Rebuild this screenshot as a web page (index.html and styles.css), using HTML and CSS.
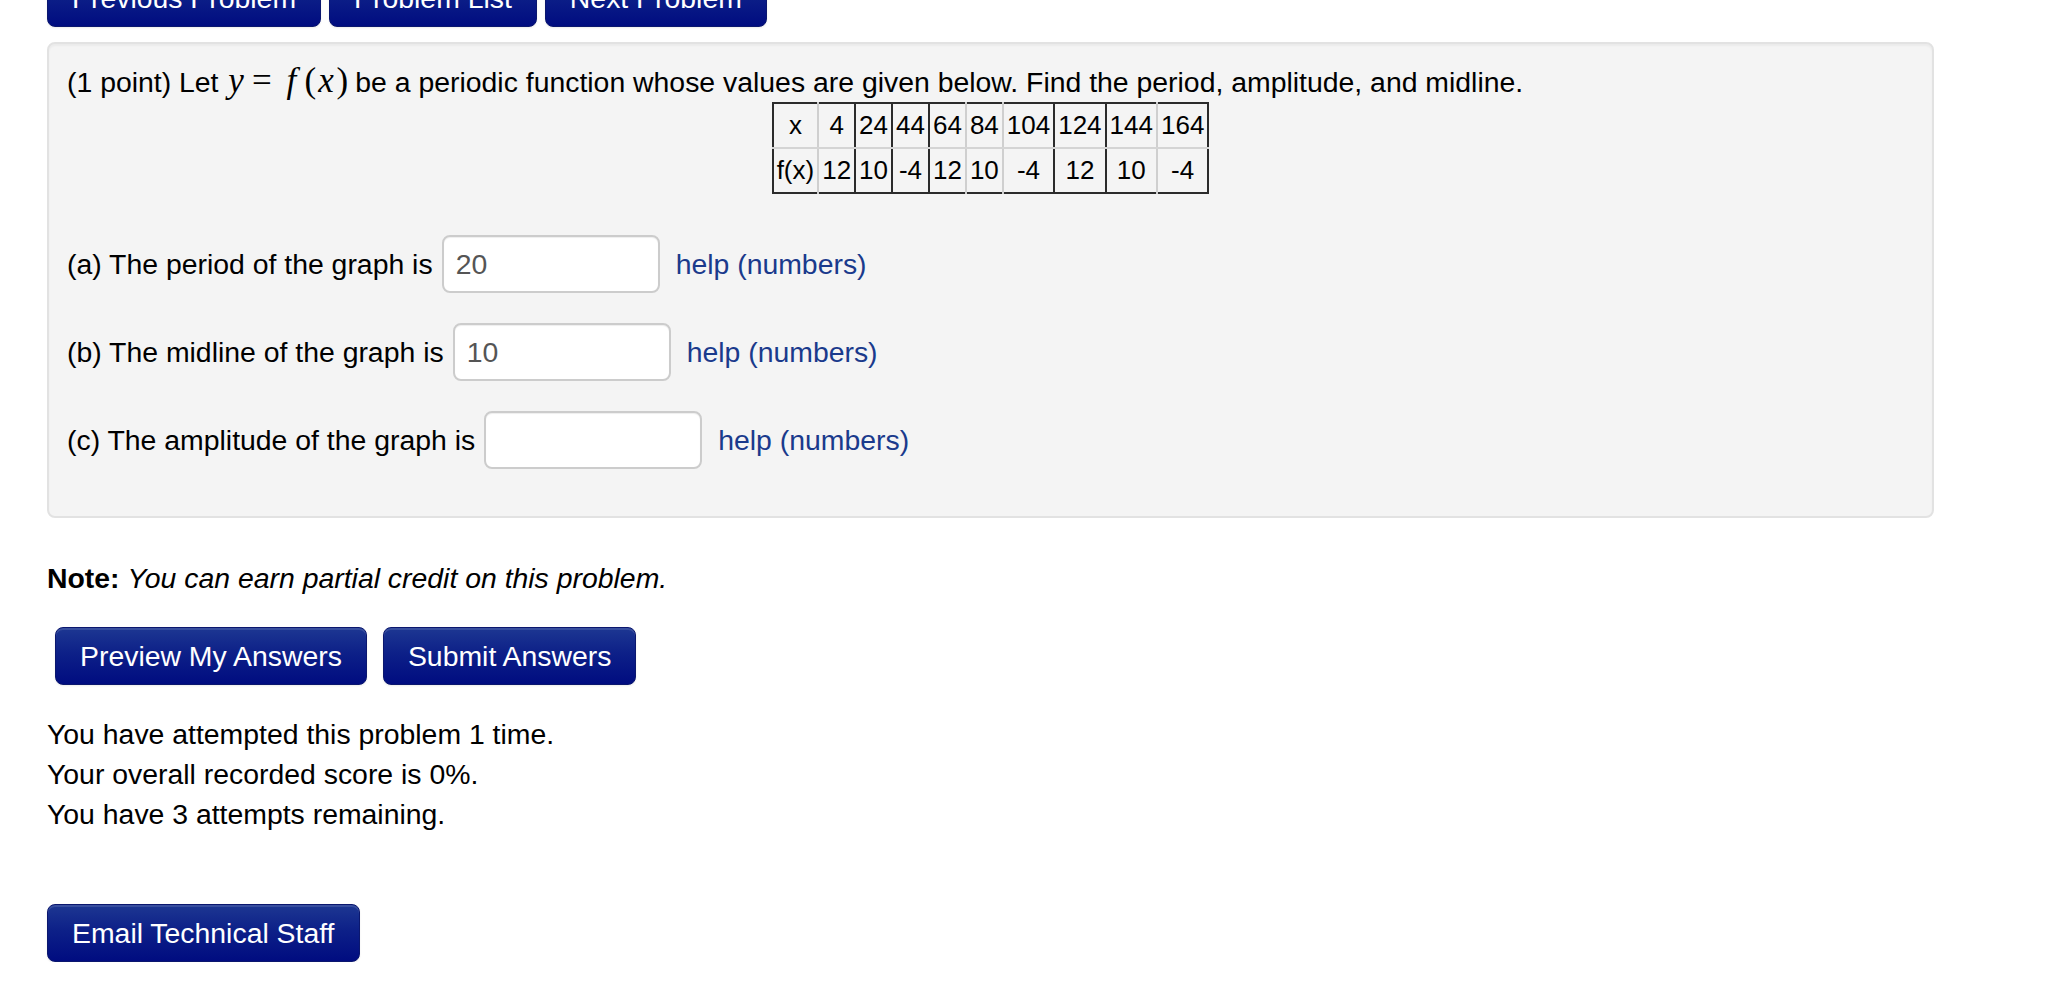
FILE: index.html
```html
<!DOCTYPE html>
<html lang="en">
<head>
<meta charset="utf-8">
<title>Problem</title>
<link rel="stylesheet" href="styles.css">
</head>
<body>
<div class="page">
  <div class="nav">
    <a class="btn" href="#">Previous Problem</a>
    <a class="btn" href="#">Problem List</a>
    <a class="btn" href="#">Next Problem</a>
  </div>

  <div class="panel">
    <p class="question">(1 point) Let <span class="math"><span class="mi m-y">y</span><span class="mo m-eq">=</span><span class="mi m-f">f</span><span class="mo m-lp">(</span><span class="mi m-x">x</span><span class="mo m-rp">)</span></span> be a periodic function whose values are given below. Find the period, amplitude, and midline.</p>
    <table class="values">
      <tr><td>x</td><td>4</td><td>24</td><td>44</td><td>64</td><td>84</td><td>104</td><td>124</td><td>144</td><td>164</td></tr>
      <tr><td>f(x)</td><td>12</td><td>10</td><td>-4</td><td>12</td><td>10</td><td>-4</td><td>12</td><td>10</td><td>-4</td></tr>
    </table>
    <div class="answers">
      <div class="ans-row"><span>(a) The period of the graph is</span><input class="ans" type="text" value="20"><a class="help" href="#">help (numbers)</a></div>
      <div class="ans-row"><span>(b) The midline of the graph is</span><input class="ans" type="text" value="10"><a class="help" href="#">help (numbers)</a></div>
      <div class="ans-row"><span>(c) The amplitude of the graph is</span><input class="ans" type="text" value=""><a class="help" href="#">help (numbers)</a></div>
    </div>
  </div>

  <p class="note"><b>Note:</b> <i>You can earn partial credit on this problem.</i></p>

  <div class="submit-row">
    <a class="btn" href="#">Preview My Answers</a>
    <a class="btn" href="#">Submit Answers</a>
  </div>

  <div class="status">
    <div>You have attempted this problem 1 time.</div>
    <div>Your overall recorded score is 0%.</div>
    <div>You have 3 attempts remaining.</div>
  </div>

  <a class="btn email" href="#">Email Technical Staff</a>
</div>
</body>
</html>
```

FILE: styles.css
```css
html, body {
  margin: 0;
  padding: 0;
  background: #ffffff;
}

body {
  font-family: "Liberation Sans", Arial, Helvetica, sans-serif;
  font-size: 28.4px;
  line-height: 40px;
  color: #000;
}

.page {
  display: flex;
  flex-direction: column;
  align-items: flex-start;
  padding-left: 47px;
}

.nav {
  display: flex;
  gap: 8px;
  margin-top: -31px;
}

.btn {
  display: inline-block;
  box-sizing: border-box;
  height: 58px;
  padding: 8px 24px;
  border: 1px solid #0b176e;
  border-radius: 8px;
  background: linear-gradient(to bottom, #1d3792 0%, #0d2088 45%, #000c80 100%);
  box-shadow: inset 0 2px 0 rgba(255, 255, 255, 0.12), 0 1px 2px rgba(0, 0, 0, 0.08);
  color: #ffffff;
  font-size: 28.4px;
  line-height: 40px;
  text-decoration: none;
  white-space: nowrap;
}

.panel {
  box-sizing: border-box;
  width: 1887px;
  margin-top: 15px;
  padding: 18px 18px 18px 18px;
  background: #f4f4f4;
  border: 2px solid #e2e2e2;
  border-radius: 8px;
  box-shadow: inset 0 2px 2px rgba(0, 0, 0, 0.04);
}

.question {
  margin: 0;
  white-space: nowrap;
}

.math {
  white-space: nowrap;
}

.math span {
  display: inline-block;
  font-family: "Liberation Serif", "Times New Roman", serif;
  font-size: 35px;
  line-height: 35px;
  text-align: center;
}

.mi {
  font-style: italic;
}

.m-y { width: 19px; text-align: left; }
.m-eq { width: 33px; }
.m-f { width: 26px; }
.m-lp { width: 11px; }
.m-x { width: 21px; }
.m-rp { width: 11px; }

.values {
  margin: 0 auto;
  border-collapse: collapse;
  border: 2px solid #2b2b2b;
  font-size: 26px;
  line-height: 41px;
}

.values td {
  padding: 1px 3px;
  text-align: center;
  border-right: 2px solid #cfcfcf;
  white-space: nowrap;
}

.values tr:first-child td {
  border-bottom: 2px solid #d4d4d4;
}

.values td:nth-child(2),
.values td:nth-child(3),
.values td:nth-child(4),
.values td:nth-child(7),
.values td:nth-child(8),
.values td:nth-child(10) {
  border-right-color: #2b2b2b;
}

.answers {
  display: flex;
  flex-direction: column;
  gap: 30px;
  margin-top: 41px;
  margin-bottom: 29px;
}

.ans-row {
  display: flex;
  align-items: center;
  height: 58px;
}

.ans {
  box-sizing: border-box;
  width: 218px;
  height: 58px;
  padding: 0 12px;
  margin: 0 16px 0 9px;
  border: 2px solid #cccccc;
  border-radius: 8px;
  background: #ffffff;
  box-shadow: inset 0 1px 1px rgba(0, 0, 0, 0.07);
  font-family: "Liberation Sans", Arial, Helvetica, sans-serif;
  font-size: 28.4px;
  color: #555555;
}

.help {
  color: #1a3a8c;
  text-decoration: none;
}

.note {
  margin: 40px 0 0 0;
}

.note b {
  font-weight: bold;
}

.submit-row {
  display: flex;
  gap: 16px;
  margin-top: 29px;
  padding-left: 8px;
}

.status {
  margin-top: 29px;
}

.email {
  margin-top: 70px;
}
```
